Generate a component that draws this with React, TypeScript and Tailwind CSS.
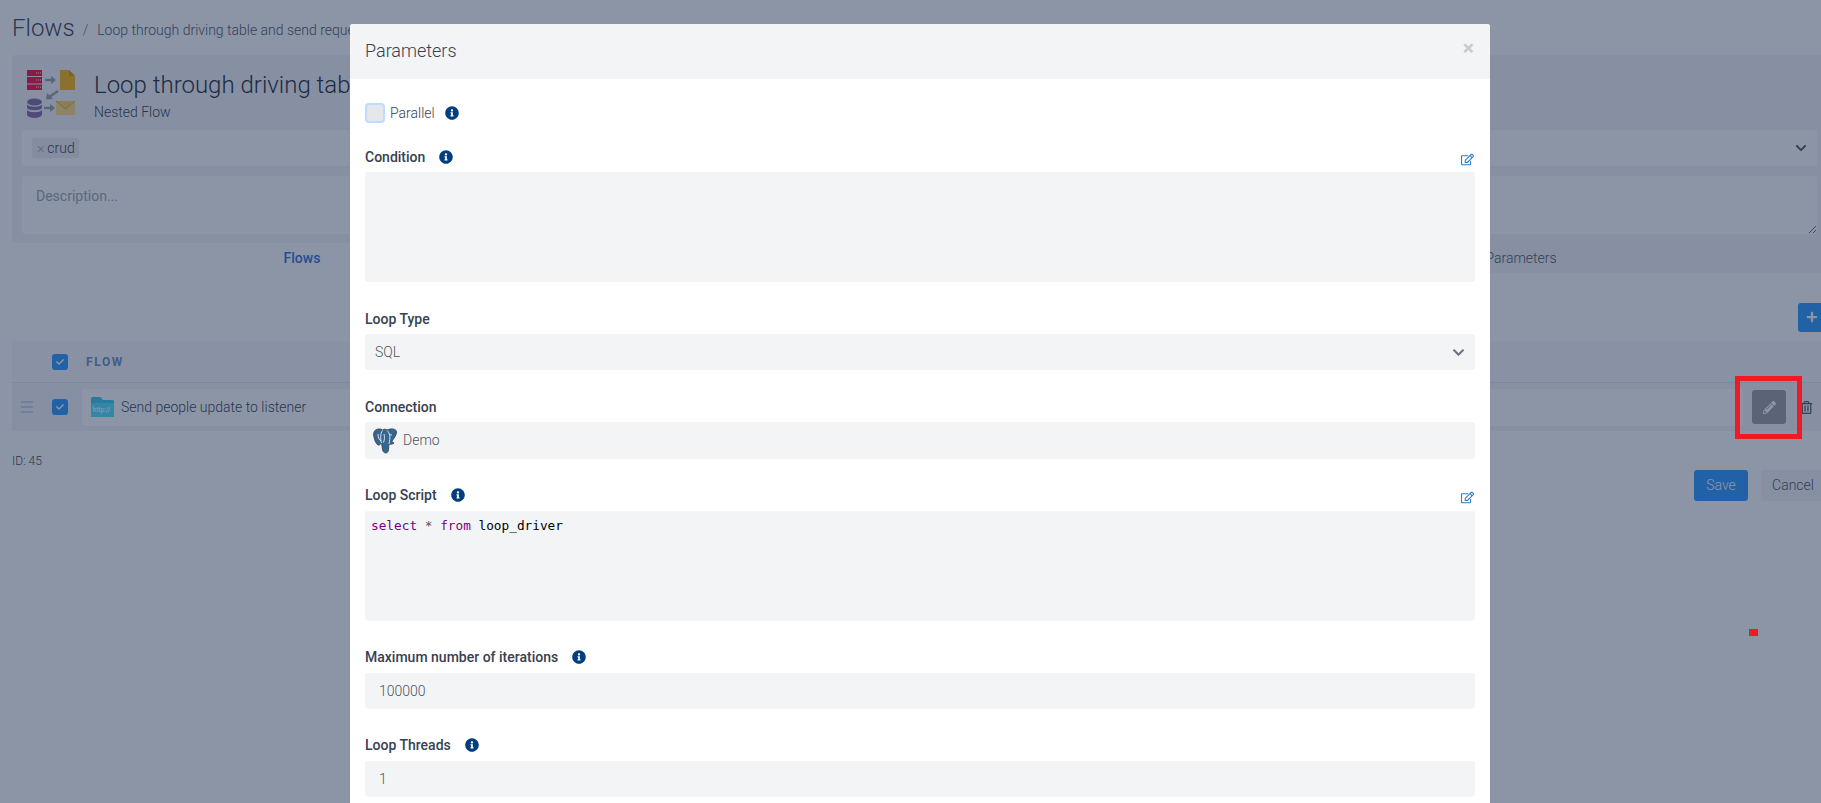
import { FaCheck, FaChevronDown, FaInfoCircle, FaPencilAlt, FaPlus, FaRegEdit, FaRegTrashAlt } from 'react-icons/fa';

const roboto = { fontFamily: 'Roboto, sans-serif' };

// Logo du flow : serveur -> fichier, base -> enveloppe
function FlowLogo() {
  return (
    <svg width="48" height="48" viewBox="0 0 48 48" className="shrink-0">
      <rect x="0" y="0" width="15" height="6" fill="#fb093d" />
      <rect x="0" y="7" width="15" height="6.5" fill="#fb093d" />
      <rect x="0" y="14.5" width="15" height="5.5" fill="#fb093d" />
      <path d="M9 3h5M9 10h5M9 17h5" stroke="#fff" strokeWidth="1" strokeDasharray="1 1" />
      <path d="M18 10h10" stroke="#9b9fa1" strokeWidth="2.4" />
      <path d="M24 6l5 4-5 4z" fill="#9b9fa1" />
      <path d="M33 0h9l6 6v14H33z" fill="#ffb70f" />
      <path d="M42 0l6 6h-6z" fill="#d9980c" />
      <path d="M31 21l-9 6" stroke="#9b9fa1" strokeWidth="2.4" />
      <path d="M20 23l-1 6.500 7-0.500z" fill="#9b9fa1" />
      <ellipse cx="7.5" cy="32" rx="7.5" ry="3.5" fill="#8569a7" />
      <path d="M0 34.500c2 3 13 3 15 0v3.500c-2 3-13 3-15 0z" fill="#8569a7" />
      <path d="M0 40c2 3 13 3 15 0v5c-2 4-13 4-15 0z" fill="#8569a7" />
      <path d="M17 38h8" stroke="#9b9fa1" strokeWidth="2.4" />
      <path d="M23 34l5 4-5 4z" fill="#9b9fa1" />
      <rect x="29" y="31" width="19" height="14" fill="#ffdc7d" />
      <path d="M29 31h19l-9.500 8z" fill="#ffcf5d" />
      <path d="M29 31l9.500 8 9.500-8" fill="none" stroke="#d9a83a" strokeWidth="1" />
    </svg>
  );
}

function FolderIcon() {
  return (
    <svg width="23" height="20" viewBox="0 0 23 20" className="shrink-0">
      <path d="M0 1.500Q0 0 1.500 0h8L12 3h9.500Q23 3 23 4.500V6H0z" fill="#37c8f0" />
      <rect x="0" y="6" width="23" height="14" fill="#4be0ff" />
      <text x="1.500" y="15" fontSize="6.5" fontWeight="700" fill="#e4f8ff" style={roboto}>http://</text>
    </svg>
  );
}

function PostgresIcon() {
  return (
    <svg width="24" height="26" viewBox="0 0 24 26" className="shrink-0">
      <path
        d="M6 1C2 1 .5 4 .7 7 1 11 3 16 5 17c1.500.5 2.500-1 3.500-2 .5 2 .5 5 1.500 8 1 2.500 4 2.500 5 .5 1-2.500.5-5.500 1-7.500 2 .5 4 0 5-1-1.500-.5-2-1-2-2 2-3 4.500-6 4.500-9 0-2.500-3.500-3.500-6-3-1.500.3-2.500.8-3.500 1-1.500-1-3-1-4.500 0C8.500 1.300 7 1 6 1z"
        fill="#336791"
        stroke="#3f4a55"
        strokeWidth="1"
      />
      <path d="M9.500 2.500C7 6 7.500 11 8.500 15M14 2.500c3 2.500 3.500 7 2 13.500M11 6c.8 3 .5 6-.5 8.500M5 6c0 3 1 6 3 7M16.500 6.500c1 0 2 .3 2.500.8" fill="none" stroke="#fff" strokeWidth="0.8" />
    </svg>
  );
}

function Info({ className = '' }: { className?: string }) {
  return <FaInfoCircle className={`text-[14px] text-[#003e7e] shrink-0 ${className}`} />;
}

function EditLink() {
  return <FaRegEdit className="ml-auto mr-px translate-y-[2px] text-[13px] text-[#2b7ed0]" />;
}

function Check() {
  return (
    <span className="flex h-4 w-4 shrink-0 items-center justify-center rounded-[3px] bg-[#2997ff] text-[8px] text-white">
      <FaCheck />
    </span>
  );
}

export default function App() {
  return (
    <div className="relative h-[803px] w-[1821px] overflow-hidden bg-white" style={roboto}>
      {/* Page derrière la modale */}
      <div className="ml-3 w-[1815px]">
        <div className="flex h-[55px] items-center">
          <span className="text-[24px] font-light text-[#374151]">Flows</span>
          <span className="ml-[8px] translate-y-[3px] text-[14px] font-light text-[#6b7280]">/</span>
          <span className="ml-[9px] translate-y-[3px] text-[14px] font-light text-[#4b5563]">Loop through driving table and send request to listener</span>
        </div>

        <div className="h-[188px] rounded-[3px] bg-[#f3f4f6] px-[10px] pt-[15px]">
          <div className="flex h-[60px] pl-[5px]">
            <FlowLogo />
            <div className="ml-[19px] -mt-[1px]">
              <div className="text-[24px] leading-[32px] font-light text-[#1f2937]">Loop through driving table and send request to listener</div>
              <div className="mt-[1px] text-[14px] font-light text-[#374151]">Nested Flow</div>
            </div>
          </div>
          <div className="flex h-[36px] items-center rounded-[3px] bg-white pl-[10px] pr-[10px]">
            <span className="flex h-5 items-center rounded-[3px] bg-[#eceef1] pl-[5px] pr-[4px] text-[14px] font-light text-[#374151]">
              <span className="mr-[3px] text-[#9ca3af]">×</span>crud
            </span>
            <FaChevronDown className="ml-auto text-[12px] text-[#4b5563]" />
          </div>
          <textarea
            readOnly
            placeholder="Description..."
            className="mt-[10px] block h-[58px] w-full rounded-[3px] bg-white px-[14px] py-[10px] text-[14px] placeholder:text-[#9ca3af] outline-none"
          />
        </div>

        <div className="flex h-[30px] text-[14px]">
          <div className="flex w-[580px] items-center justify-center font-medium text-[#2970d6]">Flows</div>
          <div className="flex w-[623px] items-center justify-center bg-[#f3f4f6] text-[#4b5563]">Steps</div>
          <div className="flex w-[612px] items-center justify-center bg-[#f3f4f6] font-light text-[#4b5563]">Parameters</div>
        </div>

        <div className="flex h-[69px] justify-end pt-[30px]">
          <button className="-mr-[1px] flex h-[29px] w-[30px] items-start justify-start rounded-[3px] bg-[#2997ff] pl-[8px] pt-[8px] text-[12px] text-white">
            <FaPlus />
          </button>
        </div>

        <div className="flex h-[41px] items-center border-b border-[#dbe7f5] bg-[#f7f9fb]">
          <div className="ml-10"><Check /></div>
          <span className="ml-[18px] text-[12px] font-bold tracking-[1.6px] text-[#6f8bbb]">FLOW</span>
        </div>
        <div className="flex h-[48px] items-center bg-[#f3f4f6]">
          <div className="flex w-10 shrink-0 flex-col items-start gap-[3px] pl-[9px]">
            <span className="h-[2px] w-3 bg-[#c7d5e6]" />
            <span className="h-[2px] w-3 bg-[#c7d5e6]" />
            <span className="h-[2px] w-3 bg-[#c7d5e6]" />
          </div>
          <Check />
          <div className="ml-[14px] flex h-[37px] w-[1661px] items-center rounded-[3px] bg-white pl-[9px]">
            <FolderIcon />
            <span className="ml-[7px] text-[14px] font-light text-[#374151]">Send people update to listener</span>
          </div>
          <button className="ml-[9px] flex h-[34px] w-[34px] items-center justify-center rounded-[3px] bg-[#9b9ba1] text-[13px] text-white">
            <FaPencilAlt />
          </button>
          <FaRegTrashAlt className="ml-[14px] text-[13px] text-[#4b5563]" />
        </div>

        <div className="pt-[21px] text-[12px] leading-[18px] font-light text-[#374151]">ID: 45</div>
        <div className="flex justify-end gap-[13px] pr-[2px] text-[14px]">
          <button className="h-[31px] w-[54px] rounded-[3px] bg-[#2997ff] font-light text-white">Save</button>
          <button className="h-[31px] w-[64px] rounded-[3px] bg-[#f3f4f6] font-light text-[#4b5563]">Cancel</button>
        </div>
      </div>

      {/* Voile */}
      <div className="absolute inset-0 bg-[#192b4d]/50" />

      {/* Annotations rouges de la capture */}
      <div className="absolute left-[1735px] top-[376px] h-[63px] w-[67px] border-[5px] border-[#ed1c24]" />
      <div className="absolute left-[1749px] top-[629px] h-[7px] w-[9px] bg-[#ed1c24]" />

      {/* Modale */}
      <div className="absolute left-[350px] top-[24px] h-[800px] w-[1140px] rounded-t-[3px] bg-white">
        <div className="flex h-[55px] items-center rounded-t-[3px] bg-[#f3f4f6] px-[15px]">
          <span className="-translate-y-[1px] text-[18px] font-light text-[#374151]">Parameters</span>
          <span className="ml-auto mr-[1px] -translate-y-[3px] text-[21px] font-bold text-[#c8cacd]">×</span>
        </div>

        <div className="px-[15px] pt-[24px]">
          <div className="mb-[24px] flex h-5 items-center">
            <span className="h-5 w-5 rounded-[4px] border-2 border-[#bfdbfe] bg-[#e5e7eb]" />
            <span className="ml-[5px] text-[14px] font-light text-[#374151]">Parallel</span>
            <Info className="ml-[10px]" />
          </div>

          <div className="mb-[5px] flex h-5 items-center text-[14px] font-medium text-[#374151]">
            Condition <Info className="ml-[14px]" /> <EditLink />
          </div>
          <div className="mb-[27px] h-[110px] rounded-[3px] bg-[#f3f4f6]" />

          <div className="mb-[5px] flex h-5 items-center text-[14px] font-medium text-[#374151]">Loop Type</div>
          <div className="mb-[27px] flex h-[36px] items-center rounded-[3px] bg-[#f3f4f6] px-[10px] text-[14px] font-light text-[#4b5563]">
            SQL
            <FaChevronDown className="ml-auto text-[13px] text-[#6b7280]" />
          </div>

          <div className="mb-[5px] flex h-5 items-center text-[14px] font-medium text-[#374151]">Connection</div>
          <div className="mb-[26px] flex h-[37px] items-center rounded-[3px] bg-[#f3f4f6] pl-2 text-[14px] font-light text-[#4b5563]">
            <PostgresIcon />
            <span className="ml-[6px]">Demo</span>
          </div>

          <div className="mb-[6px] flex h-5 items-center text-[14px] font-medium text-[#374151]">
            Loop Script <Info className="ml-[14px]" /> <EditLink />
          </div>
          <div className="mb-[26px] h-[110px] rounded-[3px] bg-[#f3f4f6] px-[6px] pt-[6px] text-[12.75px] leading-[18px] text-black" style={{ fontFamily: '"DejaVu Sans Mono", monospace' }}>
            <span className="text-[#770088]">select</span> <span className="text-[#555]">*</span> <span className="text-[#770088]">from</span> loop_driver
          </div>

          <div className="mb-[6px] flex h-5 items-center text-[14px] font-medium text-[#374151]">
            Maximum number of iterations <Info className="ml-[14px]" />
          </div>
          <div className="mb-[26px] flex h-[36px] items-center rounded-[3px] bg-[#f3f4f6] px-[14px] text-[14px] font-light text-[#4b5563]">100000</div>

          <div className="mb-[6px] flex h-5 items-center text-[14px] font-medium text-[#374151]">
            Loop Threads <Info className="ml-[14px]" />
          </div>
          <div className="flex h-[36px] items-center rounded-[3px] bg-[#f3f4f6] px-[14px] text-[14px] font-light text-[#4b5563]">1</div>
        </div>
      </div>
    </div>
  );
}
